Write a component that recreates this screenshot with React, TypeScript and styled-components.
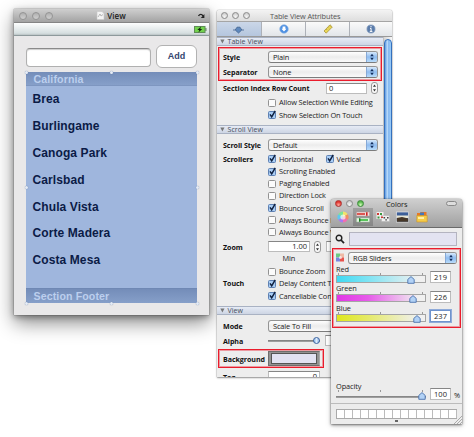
import React from "react";
import styled, { createGlobalStyle, css } from "styled-components";

const RED = "#ea1c2c";
const LUCIDA = `"Open Sans", "Noto Sans", sans-serif`;

const Global = createGlobalStyle`
  body { margin: 0; background: #fff; overflow: hidden; }
  * { box-sizing: border-box; }
`;

const Desktop = styled.main`
  position: relative;
  width: 474px;
  height: 437px;
  overflow: hidden;
  background: #fff;
  font-family: ${LUCIDA};
  font-size: 7.4px;
  line-height: 10px;
  letter-spacing: -0.12px;
  color: #1c1c1c;
  white-space: nowrap;
`;

const Window = styled.section<{ $x: number; $y: number; $w: number; $h: number }>`
  position: absolute;
  left: ${(p) => p.$x}px;
  top: ${(p) => p.$y}px;
  width: ${(p) => p.$w}px;
  height: ${(p) => p.$h}px;
  display: flex;
  flex-direction: column;
  background: #ededed;
`;

/* ---------- simulator window ---------- */

const Simulator = styled(Window)`
  background: #e9e8e9;
  box-shadow: 0 0 1px rgba(0, 0, 0, 0.6), 0 2px 6px rgba(0, 0, 0, 0.35), 0 8px 18px rgba(0, 0, 0, 0.45);
`;

const SimTitle = styled.header`
  display: flex;
  align-items: center;
  height: 14px;
  padding: 0 4px 0 5px;
  background: linear-gradient(#cfcfcf, #a3a3a3);
  border-bottom: 1px solid #858585;
  font-size: 8px;
  font-weight: 600;
  letter-spacing: 0;
  color: #1c1c1c;
`;

const Lights = styled.div<{ $gap: number }>`
  display: flex;
  gap: ${(p) => p.$gap}px;
`;

const Light = styled.i<{ $size: number; $tone?: "red" | "green" | "dim" }>`
  width: ${(p) => p.$size}px;
  height: ${(p) => p.$size}px;
  border-radius: 50%;
  border: 1px solid #8b8b8b;
  background: radial-gradient(circle at 50% 80%, #f6f6f6, #c4c4c4);
  ${(p) =>
    p.$tone === "dim" &&
    css`
      border-color: #949494;
      background: linear-gradient(#b0b0b0, #cfcfcf);
    `}
  ${(p) =>
    p.$tone === "red" &&
    css`
      border-color: #a33;
      background: radial-gradient(circle at 50% 80%, #ffaaa0, #e0332d 65%);
    `}
  ${(p) =>
    p.$tone === "green" &&
    css`
      border-color: #3e8a3c;
      background: radial-gradient(circle at 50% 80%, #d6ffc0, #58b84c 65%);
    `}
`;

const SimName = styled.div`
  flex: 1;
  display: flex;
  align-items: center;
  justify-content: center;
  gap: 2px;
  padding-right: 29px;
`;

const StatusBar = styled.div`
  display: flex;
  align-items: center;
  justify-content: flex-end;
  height: 13px;
  padding-right: 2px;
  background: linear-gradient(#fdfefe, #d6dfe0 85%, #b9c2c4);
  border-bottom: 1px solid #8e9a9c;
`;

const EntryRow = styled.div`
  display: flex;
  align-items: center;
  gap: 5px;
  height: 23px;
  margin: 9px 12px 4px;
`;

const EntryField = styled.div`
  flex: 1;
  height: 19px;
  margin-top: 1px;
  border: 1px solid #b0b0b0;
  border-top-color: #8a8a8a;
  border-radius: 4px;
  background: #fff;
  box-shadow: inset 0 1px 1px rgba(0, 0, 0, 0.2);
`;

const AddButton = styled.button`
  width: 41px;
  height: 23px;
  padding: 0;
  border: 1px solid #b2b2b2;
  border-radius: 6px;
  background: #fff;
  font: bold 9px/21px "Liberation Sans", Arial, sans-serif;
  letter-spacing: 0;
  color: #33466f;
`;

const CityTable = styled.div`
  position: relative;
  display: flex;
  flex-direction: column;
  height: 231px;
  margin: 0 12px;
  background: #9fb6dd;
  font: bold 12px/14px "Liberation Sans", Arial, sans-serif;
  letter-spacing: 0.1px;
  color: #0b1b46;
`;

const Band = styled.div<{ $foot?: boolean }>`
  height: ${(p) => (p.$foot ? 15 : 14)}px;
  padding-left: 7.5px;
  background: linear-gradient(#748db9, #869fc9);
  ${(p) => (p.$foot ? "border-top: 1px solid #6f88b4;" : "border-bottom: 1px solid #7e96c0;")}
  font-size: 10.6px;
  line-height: 14px;
  letter-spacing: 0.12px;
  color: #bccfee;
`;

const Cities = styled.ul`
  flex: 1;
  margin: 0;
  padding: 0 0 0 6.5px;
  list-style: none;
`;

const City = styled.li`
  display: flex;
  align-items: center;
  height: 26.8px;
`;

const Handle = styled.i<{ $l: string; $t: string }>`
  position: absolute;
  left: ${(p) => p.$l};
  top: ${(p) => p.$t};
  width: 3px;
  height: 3px;
  margin: -1.5px 0 0 -1.5px;
  border-radius: 50%;
  background: #e6edf8;
  box-shadow: 0 0 1px #5f7397;
`;

/* ---------- inspector window ---------- */

const Inspector = styled(Window)`
  overflow: hidden;
  border-radius: 2px 2px 0 0;
`;

const InspectorShadow = styled(Window)`
  border-radius: 2px 2px 0 0;
  box-shadow: 0 0 1px rgba(0, 0, 0, 0.65), 0 1px 2px rgba(0, 0, 0, 0.4);
`;

const InspectorTitle = styled.header`
  display: flex;
  align-items: center;
  height: 12px;
  flex: none;
  padding-left: 4px;
  background: linear-gradient(#f3f3f3, #dedede);
  border-bottom: 1px solid #a5a5a5;
  color: #555;
`;

const InspectorName = styled.span`
  margin-left: 20px;
`;

const Tabs = styled.nav`
  display: grid;
  grid-template-columns: 45px 44px 44px 1fr;
  height: 15px;
  flex: none;
  border-bottom: 1px solid #999;
`;

const Tab = styled.div<{ $on?: boolean }>`
  display: flex;
  align-items: center;
  justify-content: center;
  padding-right: ${(p) => (p.$on ? 1 : 0)}px;
  border-right: 1px solid #adb1b8;
  background: ${(p) => (p.$on ? "linear-gradient(#cbd7e8, #b5c6de)" : "linear-gradient(#fafafa, #e2e5e9)")};
  &:last-child { border-right: 0; }
`;

const InspectorMain = styled.div`
  display: grid;
  grid-template-columns: 166px 9px;
  flex: 1;
  min-height: 0;
`;

const Attributes = styled.div`
  min-width: 0;
`;

const SectionHead = styled.h3`
  display: flex;
  align-items: center;
  gap: 2.5px;
  height: 9px;
  margin: 0;
  padding-left: 3px;
  border-top: 1px solid #a9b2c3;
  border-bottom: 1px solid #a9b2c3;
  background: linear-gradient(#e6ebf5, #cdd5e4);
  font-size: 7px;
  font-weight: 400;
  line-height: 7px;
  letter-spacing: 0.06px;
  color: #474d5a;
`;

const SectionBody = styled.div<{ $h: number; $pad?: number }>`
  display: flow-root;
  height: ${(p) => p.$h}px;
  padding-top: ${(p) => p.$pad ?? 0}px;
`;

const Highlight = styled.div<{ $w: number; $h: number; $pad?: number }>`
  width: ${(p) => p.$w}px;
  height: ${(p) => p.$h}px;
  margin: 1px 0 0 1px;
  padding-top: ${(p) => p.$pad ?? 0}px;
  border: 1px solid ${RED};
  box-shadow: inset 0 0 0 1px rgba(234, 28, 44, 0.4);
`;

const Row = styled.div<{ $h: number; $boxed?: boolean; $gap?: number }>`
  display: flex;
  align-items: center;
  height: ${(p) => p.$h}px;
  margin-top: ${(p) => p.$gap ?? 0}px;
  padding-left: ${(p) => (p.$boxed ? 4 : 6)}px;
`;

const Label = styled.span<{ $w?: number }>`
  flex: none;
  width: ${(p) => p.$w ?? 45}px;
  font-weight: 700;
  font-size: 7.1px;
  letter-spacing: -0.06px;
  color: #111;
`;

const SelectBox = styled.div<{ $w: number }>`
  display: flex;
  align-items: center;
  flex: none;
  width: ${(p) => p.$w}px;
  height: 12px;
  padding-left: 4px;
  border: 1px solid #949494;
  border-bottom-color: #7c7c7c;
  border-radius: 3px;
  background: linear-gradient(#fff, #ececec 50%, #fafafa);
  overflow: hidden;
`;

const Cap = styled.span`
  display: flex;
  align-items: center;
  justify-content: center;
  width: 11px;
  height: 10px;
  margin-left: auto;
  background: linear-gradient(#d6e8fb, #8fbcf0 50%, #b8dcfb);
  border-left: 1px solid #86a9d6;
`;

const Tick = styled.label<{ $w?: number }>`
  display: flex;
  align-items: center;
  gap: 3px;
  flex: none;
  width: ${(p) => (p.$w ? p.$w + "px" : "auto")};
  letter-spacing: -0.16px;
`;

const NumberBox = styled.div<{ $w: number; $h?: number; $align?: string; $focus?: boolean; $left?: number; $drop?: number }>`
  flex: none;
  width: ${(p) => p.$w}px;
  height: ${(p) => p.$h ?? 11}px;
  margin-left: ${(p) => p.$left ?? 0}px;
  margin-top: ${(p) => p.$drop ?? 0}px;
  padding: 0 2px;
  border: 1px solid #bcbcbc;
  border-top-color: #868686;
  background: #fff;
  font-size: 7.5px;
  letter-spacing: 0;
  line-height: ${(p) => (p.$h ?? 11) - 2}px;
  text-align: ${(p) => p.$align ?? "right"};
  ${(p) => p.$focus && "border-color: #6f93cc; box-shadow: 0 0 0 1px #8fabda;"}
`;

const Stepper = styled.div`
  display: flex;
  align-items: center;
  justify-content: center;
  width: 7px;
  height: 12px;
  margin-left: 4px;
  border: 1px solid #999;
  border-radius: 3px;
  background: #f8f8f8;
`;

const AlphaTrack = styled.div`
  display: flex;
  align-items: center;
  justify-content: flex-end;
  width: 52px;
  height: 8px;
  background: linear-gradient(transparent 3px, #777 3px, #aaa 5px, transparent 5px);
`;

const Knob = styled.i`
  width: 7px;
  height: 7px;
  border: 1px solid #3c64a0;
  border-radius: 50%;
  background: linear-gradient(90deg, #8fb7ea, #dcebfb 50%, #8fb7ea);
`;

const ColorWell = styled.div`
  width: 52px;
  height: 15px;
  padding: 1px 2px;
  background: #929292;
  border: 1px solid #6e6e6e;
  border-right-color: #a8a8a8;
`;

const WellFill = styled.div`
  height: 11px;
  border: 1px solid #555;
  background: #e2e2f2;
`;

const ScrollTrack = styled.div`
  padding-top: 2px;
  border-left: 1px solid #c0c0c0;
  background: linear-gradient(90deg, #d5d5d5, #f8f8f8);
`;

const ScrollThumb = styled.div`
  height: 260px;
  border: 1px solid #3470bd;
  border-radius: 4px;
  background: linear-gradient(90deg, #5f9ae2, #b9dbfa 40%, #86b8f0 60%, #9accf8);
`;

/* ---------- colour picker window ---------- */

const Picker = styled(Window)`
  background: #ececec;
  border-radius: 3px 3px 0 0;
  box-shadow: 0 0 1px rgba(0, 0, 0, 0.7), 0 1px 3px rgba(0, 0, 0, 0.5), 0 2px 6px rgba(0, 0, 0, 0.15);
`;

const PickerTop = styled.header`
  height: 29px;
  flex: none;
  border-radius: 3px 3px 0 0;
  border-bottom: 1px solid #696969;
  background: linear-gradient(#cfcfcf, #a0a0a0);
`;

const PickerTitle = styled.div`
  display: flex;
  align-items: center;
  height: 9px;
  padding: 0 5px 0 4px;
`;

const PickerName = styled.span`
  flex: 1;
  padding-left: 22px;
  letter-spacing: -0.1px;
`;

const Pill = styled.i`
  width: 11px;
  height: 5px;
  border: 1px solid #888;
  border-radius: 3px;
  background: #ddd;
`;

const PickerTools = styled.div`
  display: grid;
  grid-template-columns: 20px 20px 19px 20px 20px;
  height: 19px;
  margin-left: 2px;
`;

const Tool = styled.div<{ $on?: boolean }>`
  display: flex;
  align-items: center;
  justify-content: center;
  height: 18px;
  background: ${(p) => (p.$on ? "rgba(0,0,0,0.17)" : "none")};
`;

const Sample = styled.div`
  display: flex;
  align-items: center;
  gap: 4px;
  height: 14px;
  margin: 4px 5px 0 4px;
`;

const SampleFill = styled.div`
  flex: 1;
  height: 14px;
  border: 1px solid #b4b4c0;
  background: #e3e3f1;
`;

const PickerHighlight = styled.div`
  height: 80px;
  margin: 2px 1px 0 1px;
  padding: 2px 3px 0 3px;
  border: 1px solid ${RED};
  box-shadow: inset 0 0 0 1px rgba(234, 28, 44, 0.4);
`;

const ModeRow = styled.div`
  display: flex;
  align-items: center;
  gap: 4px;
  height: 13px;
`;

const Channel = styled.div`
  display: grid;
  grid-template-columns: 90px 22px 10px;
  column-gap: 4px;
  align-items: center;
  height: 19.6px;
`;

const ChannelName = styled.div`
  height: 8px;
  line-height: 8px;
`;

const Marks = styled.div`
  display: flex;
  justify-content: space-between;
  height: 2px;
  padding: 0 3px 0 2px;
`;

const Mark = styled.i`
  width: 1px;
  height: 2px;
  background: #999;
`;

const Ramp = styled.div<{ $from: string; $mid: string }>`
  height: 8px;
  border: 1px solid #a5a5a5;
  background: linear-gradient(90deg, ${(p) => p.$from}, ${(p) => p.$mid} 35%, #f0f0f0 92%);
`;

const Thumb = styled.svg`
  display: block;
`;

const ThumbSlot = styled.div<{ $pos: number }>`
  padding-left: ${(p) => p.$pos}px;
`;

const OpacityRow = styled(Channel)`
  height: 21px;
  margin: 53px 0 0 5px;
`;

const Percent = styled.span`
  margin: 6px 0 0 -2px;
`;

const OpacityTrack = styled.div`
  height: 9px;
  padding-left: 82px;
  background: linear-gradient(transparent 4px, #7c7c7c 4px, #aaa 6px, transparent 6px);
`;

const Tray = styled.footer`
  display: flex;
  flex-direction: column;
  align-items: center;
  flex: 1;
  margin-top: 1px;
  padding-top: 5px;
  border-top: 1px solid #bcbcbc;
`;

const Swatches = styled.div`
  display: grid;
  grid-template-columns: repeat(15, 1fr);
  width: 121px;
  height: 10px;
  border: 1px solid #aaa;
  border-right: 0;
  background: #fff;
`;

const Swatch = styled.i`
  border-right: 1px solid #bbb;
`;

const Grip = styled.svg`
  position: absolute;
  right: 0;
  bottom: 0;
`;

const Dot = styled.i`
  width: 3px;
  height: 2px;
  margin-top: 1px;
  background: #666;
`;

/* ---------- shared pieces ---------- */

const Arrows = () => (
  <svg width="6" height="8" viewBox="0 0 6 8">
    <path d="M3 .8 4.8 3.2H1.2zM3 7.2 4.8 4.8H1.2z" fill="#15305f" />
  </svg>
);

const Select = ({ w, children }: { w: number; children: string }) => (
  <SelectBox $w={w}>
    {children}
    <Cap>
      <Arrows />
    </Cap>
  </SelectBox>
);

const Check = ({ on, w, children }: { on?: boolean; w?: number; children: string }) => (
  <Tick $w={w}>
    <svg width="8" height="9" viewBox="0 0 8 9">
      <rect x=".5" y="1.5" width="7" height="7" rx="1" fill={on ? "#a9cdf5" : "#fbfbfb"} stroke={on ? "#5f81b3" : "#929292"} />
      {on && <path d="M2 4.3 3.7 6.8 7.2.9" fill="none" stroke="#10203f" strokeWidth="1.5" />}
    </svg>
    {children}
  </Tick>
);

const Steps = () => (
  <Stepper>
    <svg width="5" height="8" viewBox="0 0 5 8">
      <path d="M2.5.5 4 2.8H1zM2.5 7.5 4 5.2H1z" fill="#333" />
    </svg>
  </Stepper>
);

const Head = ({ children }: { children: string }) => (
  <SectionHead>
    <svg width="5" height="5" viewBox="0 0 5 5">
      <path d="M.3.5h4.2L2.4 4.5z" fill="#777" />
    </svg>
    {children}
  </SectionHead>
);

const SliderThumb = () => (
  <Thumb width="8" height="8" viewBox="0 0 8 8">
    <path d="M4 .6 7.2 3.4V7.3H.8V3.4z" fill="#b2d2f6" stroke="#4a72ad" strokeWidth=".9" strokeLinejoin="round" />
  </Thumb>
);

const TickMarks = () => (
  <Marks>
    <Mark />
    <Mark />
    <Mark />
  </Marks>
);

const cities = ["Brea", "Burlingame", "Canoga Park", "Carlsbad", "Chula Vista", "Corte Madera", "Costa Mesa"];

const handles = [
  ["0.5px", "0.5px"], ["50%", "0.5px"], ["100%", "0.5px"],
  ["0.5px", "50%"], ["100%", "50%"],
  ["0.5px", "100%"], ["50%", "100%"], ["100%", "100%"],
];

const scrollOptions = [
  { text: "Scrolling Enabled", on: true },
  { text: "Paging Enabled", on: false },
  { text: "Direction Lock", on: false },
  { text: "Bounce Scroll", on: true },
  { text: "Always Bounce H", on: false },
  { text: "Always Bounce V", on: false },
];

const channels = [
  { name: "Red", value: "219", pos: 70, from: "#3fd9f2", mid: "#7de3f3" },
  { name: "Green", value: "226", pos: 72, from: "#e136e6", mid: "#e65be9" },
  { name: "Blue", value: "237", pos: 76, from: "#dfe81c", mid: "#e5ea68" },
];

const SimulatorWindow = () => (
  <Simulator $x={14} $y={9} $w={195} $h={306}>
    <SimTitle>
      <Lights $gap={5}>
        <Light $size={8} $tone="dim" />
        <Light $size={8} $tone="dim" />
        <Light $size={8} $tone="dim" />
      </Lights>
      <SimName>
        <svg width="9" height="9" viewBox="0 0 9 9">
          <path d="M1 .5h5L8 2.5v6H1z" fill="#f4f4f4" stroke="#c8c8c8" strokeWidth=".6" />
          <path d="m2 6 2-3 1 2 2-1.5" fill="none" stroke="#aaa" strokeWidth=".8" />
        </svg>
        View
      </SimName>
      <svg width="7" height="6" viewBox="0 0 7 6">
        <path d="M.5 3C1.8.8 3.8.8 5 3" fill="none" stroke="#222" strokeWidth="1.4" />
        <path d="M6.4 1v4H2.8z" fill="#222" />
      </svg>
    </SimTitle>
    <StatusBar>
      <svg width="13" height="7" viewBox="0 0 13 7">
        <rect x=".5" y=".5" width="10.5" height="6" fill="#72d24d" stroke="#5f8d56" />
        <rect x="11.2" y="2" width="1.3" height="3" fill="#6b8a64" />
        <path d="M7 .6 3.3 4h2L4.4 6.5 8.3 3h-2z" fill="#10260c" />
      </svg>
    </StatusBar>
    <EntryRow>
      <EntryField />
      <AddButton>Add</AddButton>
    </EntryRow>
    <CityTable>
      <Band>California</Band>
      <Cities>
        {cities.map((c) => (
          <City key={c}>{c}</City>
        ))}
      </Cities>
      <Band $foot>Section Footer</Band>
      {handles.map(([l, t]) => (
        <Handle key={l + t} $l={l} $t={t} />
      ))}
    </CityTable>
  </Simulator>
);

const InspectorWindow = () => (
  <>
    <InspectorShadow $x={217} $y={10} $w={175} $h={367} />
    <Inspector $x={217} $y={10} $w={175} $h={367}>
      <InspectorTitle>
        <Lights $gap={4}>
          <Light $size={7} />
          <Light $size={7} />
          <Light $size={7} />
        </Lights>
        <InspectorName>Table View Attributes</InspectorName>
      </InspectorTitle>
      <Tabs>
        <Tab $on>
          <svg width="11" height="9" viewBox="0 0 11 9">
            <path d="M0 5h2.2M8.8 5H11M2.2 5 4 2.2h3L8.8 5 5.5 8z" fill="#5e88bd" stroke="#41638f" strokeWidth=".8" />
          </svg>
        </Tab>
        <Tab>
          <svg width="10" height="10" viewBox="0 0 10 10">
            <circle cx="5" cy="5" r="4.3" fill="#4b8fe2" stroke="#9bbce6" strokeWidth=".7" />
            <path d="M3.6 2.5h2.8v2.2h1.2L5 7.4 2.4 4.7h1.2z" fill="#fff" />
          </svg>
        </Tab>
        <Tab>
          <svg width="10" height="10" viewBox="0 0 10 10">
            <path d="M1 7 7 .8 9.3 3 3.2 9.2z" fill="#ead85a" stroke="#a08a2c" strokeWidth=".7" />
            <path d="m3.2 5 1 1m.6-2.7 1 1m.6-2.6 1 1" stroke="#a08a2c" strokeWidth=".6" />
          </svg>
        </Tab>
        <Tab>
          <svg width="10" height="10" viewBox="0 0 10 10">
            <circle cx="5" cy="5" r="4.1" fill="#5b7dab" stroke="#8fa5c4" strokeWidth=".7" />
            <path d="M5 2v1.3M4 4.4h1.1v3M3.8 7.4h2.6" stroke="#fff" strokeWidth="1" fill="none" />
          </svg>
        </Tab>
      </Tabs>
      <InspectorMain>
        <Attributes>
          <Head>Table View</Head>
          <SectionBody $h={79}>
            <Highlight $w={164} $h={34} $pad={1}>
              <Row $h={15} $boxed>
                <Label>Style</Label>
                <Select w={110}>Plain</Select>
              </Row>
              <Row $h={15.5} $boxed>
                <Label>Separator</Label>
                <Select w={110}>None</Select>
              </Row>
            </Highlight>
            <Row $h={14}>
              <Label $w={103}>Section Index Row Count</Label>
              <NumberBox $w={41} $align="left">0</NumberBox>
              <Steps />
            </Row>
            <Row $h={14.5}>
              <Label />
              <Check>Allow Selection While Editing</Check>
            </Row>
            <Row $h={10.5}>
              <Label />
              <Check on>Show Selection On Touch</Check>
            </Row>
          </SectionBody>
          <Head>Scroll View</Head>
          <SectionBody $h={172} $pad={3}>
            <Row $h={15}>
              <Label>Scroll Style</Label>
              <Select w={110}>Default</Select>
            </Row>
            <Row $h={13}>
              <Label>Scrollers</Label>
              <Check on w={57.5}>Horizontal</Check>
              <Check on>Vertical</Check>
            </Row>
            {scrollOptions.map((o) => (
              <Row $h={12.17} key={o.text}>
                <Label />
                <Check on={o.on}>{o.text}</Check>
              </Row>
            ))}
            <Row $h={18}>
              <Label>Zoom</Label>
              <NumberBox $w={42}>1.00</NumberBox>
              <Steps />
              <NumberBox $w={42} $left={5} />
            </Row>
            <Row $h={4}>
              <Label $w={59.5} />
              Min
            </Row>
            <Row $h={12.2} $gap={5.1}>
              <Label />
              <Check>Bounce Zoom</Check>
            </Row>
            <Row $h={12.2}>
              <Label>Touch</Label>
              <Check on>Delay Content T</Check>
            </Row>
            <Row $h={12.2}>
              <Label />
              <Check on>Cancellable Con</Check>
            </Row>
          </SectionBody>
          <Head>View</Head>
          <SectionBody $h={70} $pad={3}>
            <Row $h={15}>
              <Label>Mode</Label>
              <Select w={110}>Scale To Fill</Select>
            </Row>
            <Row $h={15}>
              <Label>Alpha</Label>
              <AlphaTrack>
                <Knob />
              </AlphaTrack>
              <NumberBox $w={42} $left={5} />
            </Row>
            <Highlight $w={106} $h={19}>
              <Row $h={17} $boxed>
                <Label>Background</Label>
                <ColorWell>
                  <WellFill />
                </ColorWell>
              </Row>
            </Highlight>
            <Row $h={11} $gap={3}>
              <Label>Tag</Label>
              <NumberBox $w={52}>0</NumberBox>
            </Row>
          </SectionBody>
        </Attributes>
        <ScrollTrack>
          <ScrollThumb />
        </ScrollTrack>
      </InspectorMain>
    </Inspector>
  </>
);

const PickerWindow = () => (
  <Picker $x={331} $y={199} $w={131} $h={225}>
    <PickerTop>
      <PickerTitle>
        <Lights $gap={4}>
          <Light $size={7} $tone="red" />
          <Light $size={7} />
          <Light $size={7} $tone="green" />
        </Lights>
        <PickerName>Colors</PickerName>
        <Pill />
      </PickerTitle>
      <PickerTools>
        <Tool>
          <svg width="12" height="12" viewBox="0 0 12 12">
            <path d="M6 6V.5A5.5 5.5 0 0 1 10.8 3.2z" fill="#f3e36a" />
            <path d="M6 6 10.8 3.2A5.5 5.5 0 0 1 10.8 8.8z" fill="#f28d63" />
            <path d="M6 6 10.8 8.8A5.5 5.5 0 0 1 6 11.5z" fill="#f26fb0" />
            <path d="M6 6V11.5A5.5 5.5 0 0 1 1.2 8.8z" fill="#a87af0" />
            <path d="M6 6 1.2 8.8A5.5 5.5 0 0 1 1.2 3.2z" fill="#5fc8f0" />
            <path d="M6 6 1.2 3.2A5.5 5.5 0 0 1 6 .5z" fill="#7ee495" />
            <circle cx="6" cy="6" r="2.6" fill="#fff" opacity=".65" />
          </svg>
        </Tool>
        <Tool $on>
          <svg width="14" height="12" viewBox="0 0 14 12">
            <path d="M.5 1h13v4H.5z" fill="#f5dede" stroke="#b99" strokeWidth=".5" />
            <path d="M1 3h8" stroke="#d8352e" strokeWidth="1.6" />
            <path d="M10 1.3h1.6v3.4H10z" fill="#c22" />
            <path d="M.5 7h13v4H.5z" fill="#e2f5e0" stroke="#9b9" strokeWidth=".5" />
            <path d="M4 9h8" stroke="#36b83a" strokeWidth="1.6" />
            <path d="M3 7.3h1.4v3.4H3z" fill="#187a20" />
          </svg>
        </Tool>
        <Tool>
          <svg width="14" height="12" viewBox="0 0 14 12">
            <rect x=".5" y="1" width="7" height="7" fill="#f2eeee" />
            <rect x="5.5" y="4.5" width="8" height="6" fill="#efefef" stroke="#aaa" strokeWidth=".4" />
            <path d="M1 2h2v2H1zM5 5.5h2v1.6H5z" fill="#cf3a33" />
            <path d="M4 2h2v2H4zM1.5 5.5h2v2h-2z" fill="#3a9a41" />
            <path d="M7.5 6h1.6v1.4H7.5zM11 6h1.6v1.4H11zM9.3 8.2h1.6v1.4H9.3z" fill="#444" />
          </svg>
        </Tool>
        <Tool>
          <svg width="13" height="12" viewBox="0 0 13 12">
            <rect x=".4" y="1" width="12.2" height="10" fill="#3d5f98" stroke="#e7e7e7" strokeWidth=".7" />
            <path d="M.8 4.5h11.4V7H.8z" fill="#e8e6d4" />
            <path d="M.8 7 6 6l6.2 1.5v3.2H.8z" fill="#463727" />
          </svg>
        </Tool>
        <Tool>
          <svg width="12" height="12" viewBox="0 0 12 12">
            <path d="M1 2h3l1-1h5.5v4H1z" fill="#e67824" />
            <path d="M4 1.5h4v3H4z" fill="#4777bb" />
            <path d="M.8 4.5h10.4V11H.8z" fill="#f5cb48" stroke="#c8922c" strokeWidth=".6" />
            <path d="M2 6h6v2H2z" fill="#fff0a8" />
          </svg>
        </Tool>
      </PickerTools>
    </PickerTop>
    <Sample>
      <svg width="10" height="10" viewBox="0 0 10 10">
        <circle cx="4" cy="4" r="2.8" fill="#eee" stroke="#222" strokeWidth="1.4" />
        <path d="m6 6 3 3.2" stroke="#222" strokeWidth="1.8" />
      </svg>
      <SampleFill />
    </Sample>
    <PickerHighlight>
      <ModeRow>
        <svg width="9" height="9" viewBox="0 0 9 9">
          <path d="M0 0h4.5v4.5H0z" fill="#6ccb83" />
          <path d="M4.5 0H9v4.5H4.5z" fill="#efb9a5" />
          <path d="M0 4.5h4.5V9H0z" fill="#7b84e0" />
          <path d="M4.5 4.5H9V9H4.5z" fill="#e8534c" />
          <circle cx="5" cy="4.5" r="1.7" fill="#fff" opacity=".7" />
        </svg>
        <Select w={109}>RGB Sliders</Select>
      </ModeRow>
      {channels.map((c) => (
        <Channel key={c.name}>
          <div>
            <ChannelName>{c.name}</ChannelName>
            <TickMarks />
            <Ramp $from={c.from} $mid={c.mid}>
              <ThumbSlot $pos={c.pos}>
                <SliderThumb />
              </ThumbSlot>
            </Ramp>
          </div>
          <NumberBox $w={21} $h={12} $drop={7} $align="center" $focus={c.name === "Blue"}>
            {c.value}
          </NumberBox>
        </Channel>
      ))}
    </PickerHighlight>
    <OpacityRow>
      <div>
        <ChannelName>Opacity</ChannelName>
        <TickMarks />
        <OpacityTrack>
          <SliderThumb />
        </OpacityTrack>
      </div>
      <NumberBox $w={21} $h={12} $drop={5} $align="center">100</NumberBox>
      <Percent>%</Percent>
    </OpacityRow>
    <Tray>
      <Swatches>
        {Array.from({ length: 15 }, (_, i) => (
          <Swatch key={i} />
        ))}
      </Swatches>
      <Dot />
    </Tray>
    <Grip width="8" height="8" viewBox="0 0 8 8">
      <path d="M0 8 8 0M3 8 8 3M6 8 8 6" stroke="#999" strokeWidth=".8" />
    </Grip>
  </Picker>
);

export default function App() {
  return (
    <>
      <Global />
      <Desktop>
        <SimulatorWindow />
        <InspectorWindow />
        <PickerWindow />
      </Desktop>
    </>
  );
}
